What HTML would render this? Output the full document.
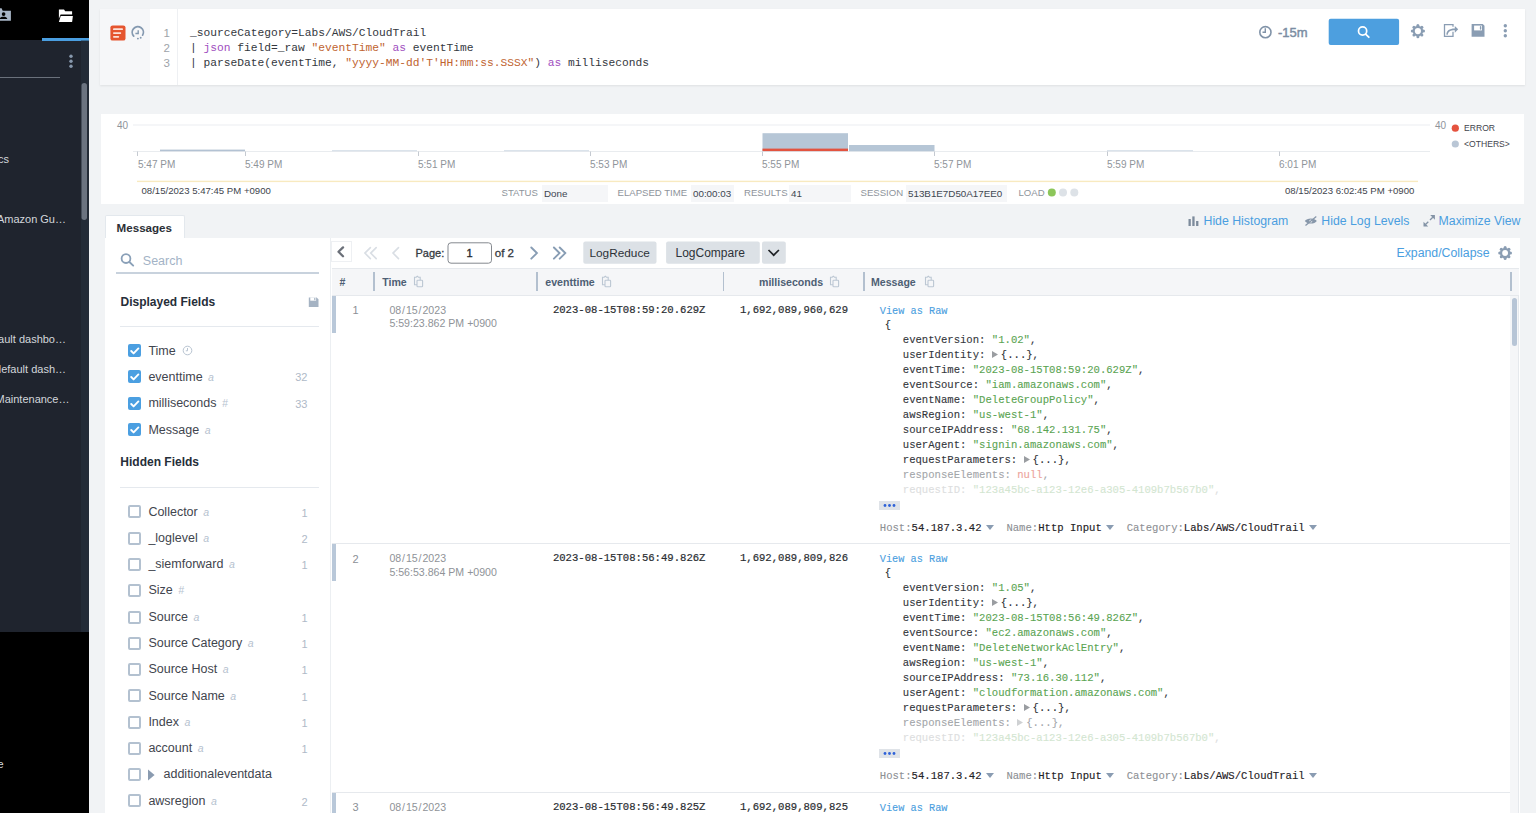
<!DOCTYPE html>
<html><head><meta charset="utf-8">
<style>
*{box-sizing:border-box;margin:0;padding:0}
html,body{width:1536px;height:813px;overflow:hidden;background:#f1f3f5;font-family:"Liberation Sans",sans-serif;position:relative}
.a{position:absolute;white-space:nowrap}
.mono{font-family:"Liberation Mono",monospace}
/* sidebar */
#sb{left:0;top:0;width:89px;height:813px;background:#000}
#sbd{left:0;top:40px;width:89px;height:592px;background:#1f242e}
.sbt{color:#d3d7dc;font-size:11px;line-height:14px}
/* query card */
#qc{left:100px;top:9px;width:1425px;height:76px;background:#fff;box-shadow:0 1px 2px rgba(0,0,0,.08)}
#qg{left:0;top:0;width:50px;height:76px;background:#f6f7f9}
#qln{left:50px;top:0;width:28px;height:76px;border-right:1px solid #eef0f3}
.ln{font-size:11.5px;color:#9ea3a9;line-height:15px;right:8px}
.code{font-size:11.25px;line-height:15px;color:#34383e;left:90px}
.kw{color:#a04ec0}
.st{color:#c0632f}
/* histogram */
#hc{left:101px;top:114px;width:1423px;height:90px;background:#fff}
.hl{font-size:10px;color:#8f949a;line-height:12px;margin-top:1px}
.sl{font-size:9.6px;color:#8e949b;line-height:12px;margin-top:0.4px}
.sv{font-size:9.8px;color:#404650;line-height:17px;background:#f5f6f8;height:16.5px;padding-left:2px}
/* fields panel */
#tab{left:104.5px;top:214.5px;width:80px;height:25px;background:#fff;border-radius:2px 2px 0 0;border:1px solid #e3e8ed;border-bottom:none}
#fp{left:105px;top:238px;width:225px;height:575px;background:#fff}
.fh{font-size:12px;font-weight:bold;color:#262e39;line-height:15px}
.cb{width:13px;height:13px;border-radius:2px}
.cbon{background:#4b9fe1}
.cboff{border:2px solid #b3c1d0;background:#fff}
.fl{font-size:12.5px;color:#3f454e;line-height:15px;left:148px;margin-top:-0.1px}
.ty{font-size:10.5px;color:#b6c2cf;font-style:italic;line-height:12px}
.ct{font-size:11px;color:#afbac8;line-height:12px;margin-top:-1.6px}
/* results */
#rp{left:330px;top:238px;width:1190px;height:575px;background:#fff;border-left:1px solid #eceff2}
#rh{left:332px;top:268px;width:1187px;height:28px;background:#f5f6f8;border-top:1px solid #e6e9ed;border-bottom:1px solid #e6e9ed}
.th{font-size:10.6px;font-weight:bold;color:#4e5f74;line-height:14px;margin-top:-0.5px}
.sep{width:1.5px;height:19px;background:#b3c0cf;top:272px}
.btn{background:#dde2e7;border-radius:2px;height:22px;font-size:13px;color:#31363d;line-height:22px;text-align:center}
.link{color:#4a9ee0;font-size:12.3px;line-height:15px}
.rn{font-size:11px;color:#8c9096;line-height:14px}
.ts{font-size:10.6px;color:#8f9398;line-height:13.4px;margin-top:0.6px}
.sl2{margin:0 0.9px}
.dv{font-size:10.6px;color:#2a2d31;line-height:14px;-webkit-text-stroke:0.2px #2a2d31;margin-top:-0.5px}
.js{font-size:10.6px;line-height:15px;color:#33363b;margin-top:0.5px;-webkit-text-stroke:0.1px currentColor}
.js .s{color:#5aa452}
.js .t{color:#8d9094}
.js .n{color:#e05a4b}
.tri{margin-right:3px;vertical-align:0px}
.hv{font-weight:normal;color:#1f2226;-webkit-text-stroke:0.15px #1f2226}
.mk{left:332px;width:4px;height:37px;background:#b9c8d9}
.rowsep{left:332px;width:1178px;height:1px;background:#e6e9ed}
</style></head><body>

<!-- SIDEBAR -->
<div id="sb" class="a"></div>
<div id="sbd" class="a"></div>
<div class="a" style="left:42px;top:38px;width:47px;height:2.5px;background:#4a9ee0"></div>
<svg class="a" style="left:0;top:0" width="89" height="38" viewBox="0 0 89 38">
  <!-- person folder (cut off) -->
  <path d="M-6 8.3 H1.6 L2.7 10.7 H10.9 V20.8 H-6 Z" fill="#a8b5c6"/>
  <circle cx="3.6" cy="14.1" r="1.85" fill="#000"/>
  <path d="M-0.3 19 C-0.1 17.3 1.6 16.7 3.5 16.7 C5.4 16.7 7.1 17.3 7.3 19 Z" fill="#000"/>
  <!-- open folder -->
  <path d="M58.9 9.6 H64 L65.2 11.2 H72.1 V14.6 H60.6 L58.9 18.8 Z" fill="#fff"/>
  <path d="M60.7 15.9 H72.9 L72.1 21.9 H58.9 Z" fill="#fff"/>
</svg>
<svg class="a" style="left:0;top:40px" width="89" height="592" viewBox="0 40 89 592">
  <circle cx="71" cy="56.3" r="1.7" fill="#8798ad"/>
  <circle cx="71" cy="61.2" r="1.7" fill="#8798ad"/>
  <circle cx="71" cy="66.2" r="1.7" fill="#8798ad"/>
  <rect x="0" y="77" width="60" height="1" fill="#6a717b"/>
  <rect x="81" y="40.6" width="8" height="591.4" fill="#232b37"/>
  <rect x="81.5" y="83" width="5.5" height="137" rx="2.75" fill="#6b7380"/>
</svg>
<div class="a sbt" style="top:152px;right:1527px">cs</div>
<div class="a sbt" style="top:212px;right:1470px">Amazon Gu…</div>
<div class="a sbt" style="top:332px;right:1470px">ault dashbo…</div>
<div class="a sbt" style="top:362px;right:1470px">default dash…</div>
<div class="a sbt" style="top:392px;right:1466.5px">Maintenance…</div>
<div class="a sbt" style="top:757px;right:1532.5px">le</div>

<!-- QUERY CARD -->
<div id="qc" class="a">
  <div id="qg" class="a"></div>
  <div id="qln" class="a"></div>
  <svg class="a" style="left:0;top:0" width="50" height="40" viewBox="100 9 50 40">
    <rect x="110.4" y="25.4" width="15.1" height="15.2" rx="2.2" fill="#e5552f"/>
    <rect x="113" y="28.35" width="10" height="1.7" rx=".85" fill="#fbe1d9"/>
    <rect x="113" y="32.25" width="8.2" height="1.7" rx=".85" fill="#fbe1d9"/>
    <rect x="113" y="35.95" width="6.2" height="1.7" rx=".85" fill="#fbe1d9"/>
    <path d="M133.7 36.1 A5.6 5.6 0 1 1 142.65 35.1" fill="none" stroke="#8499b0" stroke-width="1.8" stroke-linecap="round"/>
    <path d="M138.2 30.2 V33.5 H135.4" fill="none" stroke="#8499b0" stroke-width="1.4"/>
    <circle cx="137.9" cy="38.6" r="0.95" fill="#8499b0"/>
    <circle cx="140.7" cy="37.7" r="0.95" fill="#8499b0"/>
  </svg>
  <div class="a ln" style="top:16.7px;left:50px;width:20px;text-align:right">1<br>2<br>3</div>
  <div class="a code mono" style="top:16.8px">_sourceCategory=Labs/AWS/CloudTrail<br>| <span class="kw">json</span> field=_raw <span class="st">"eventTime"</span> <span class="kw">as</span> eventTime<br>| parseDate(eventTime, <span class="st">"yyyy-MM-dd'T'HH:mm:ss.SSSX"</span>) <span class="kw">as</span> milliseconds</div>
  <!-- right toolbar -->
  <svg class="a" style="left:1150px;top:0" width="275" height="76" viewBox="1250 9 275 76">
    <circle cx="1265.4" cy="32.2" r="5.6" fill="none" stroke="#8193a8" stroke-width="1.6"/>
    <path d="M1265.3 28.3 V32.3 H1262.5" fill="none" stroke="#8193a8" stroke-width="1.4"/>
    <rect x="1328.7" y="18.7" width="70.4" height="26.3" rx="2" fill="#4d9fdf"/>
    <circle cx="1362.6" cy="31" r="4.1" fill="none" stroke="#fff" stroke-width="1.7"/>
    <path d="M1365.6 34.1 L1368.8 37.2" stroke="#fff" stroke-width="1.8" stroke-linecap="round"/>
    <!-- gear -->
    <g transform="translate(1417.9 31.1)" fill="#8a9db3">
      <circle r="5.3"/>
      <g id="teeth">
      <circle cx="0" cy="-5.6" r="1.5"/><circle cx="0" cy="5.6" r="1.5"/><circle cx="5.6" cy="0" r="1.5"/><circle cx="-5.6" cy="0" r="1.5"/>
      <circle cx="3.96" cy="3.96" r="1.5"/><circle cx="-3.96" cy="3.96" r="1.5"/><circle cx="3.96" cy="-3.96" r="1.5"/><circle cx="-3.96" cy="-3.96" r="1.5"/>
      </g>
      <circle r="3.1" fill="#fff"/>
    </g>
    <!-- share -->
    <path d="M1453 26.8 V24.6 H1444.5 V36.4 H1453 V31.8" fill="none" stroke="#8a9db3" stroke-width="1.3"/>
    <path d="M1446.4 34.8 C1446.4 30.8 1449.2 28.6 1454.8 28.6 V25.9 L1458.2 29.3 L1454.8 32.7 V30.2 C1450.5 30.2 1448.1 31.6 1447.8 34.8 Z" fill="#8a9db3"/>
    <!-- save -->
    <path d="M1471.6 24 H1482.7 L1484.5 25.8 V36.8 H1471.6 Z" fill="#8a9db3"/>
    <rect x="1474.1" y="25.6" width="7.9" height="4.8" fill="#fff"/>
    <rect x="1479.9" y="26.1" width="1.4" height="3.6" rx=".7" fill="#8a9db3"/>
    <circle cx="1505.3" cy="25.7" r="1.7" fill="#8a9db3"/>
    <circle cx="1505.3" cy="30.7" r="1.7" fill="#8a9db3"/>
    <circle cx="1505.3" cy="35.7" r="1.7" fill="#8a9db3"/>
  </svg>
  <div class="a" style="left:1178px;top:16px;font-size:13px;line-height:16px;color:#7b8da3;-webkit-text-stroke:0.45px #7b8da3">-15m</div>
</div>

<!-- HISTOGRAM -->
<div id="hc" class="a"></div>
<svg class="a" style="left:101px;top:114px" width="1421" height="90" viewBox="101 114 1421 90">
  <rect x="133" y="124.5" width="1297" height="1" fill="#eceef1"/>
  <rect x="133" y="151" width="1297" height="1" fill="#e9ecef"/>
  <rect x="160" y="149.6" width="85" height="1.6" fill="#b3c2d3"/>
  <rect x="332" y="150.2" width="85" height="1" fill="#d3dce6"/>
  <rect x="504" y="150.2" width="85" height="1" fill="#d3dce6"/>
  <rect x="1107" y="150.2" width="86" height="1" fill="#d3dce6"/>
  <rect x="762.5" y="133.2" width="85.5" height="18" fill="#b6c6d6"/>
  <rect x="762.5" y="148.6" width="85.5" height="2.5" fill="#e3533f"/>
  <rect x="849" y="145" width="85.5" height="6.2" fill="#b6c6d6"/>
  <g fill="#c5cad1">
    <rect x="137" y="151.5" width="1" height="4.5"/>
    <rect x="245" y="151.5" width="1" height="4.5"/>
    <rect x="418" y="151.5" width="1" height="4.5"/>
    <rect x="590" y="151.5" width="1" height="4.5"/>
    <rect x="762" y="151.5" width="1" height="4.5"/>
    <rect x="934" y="151.5" width="1" height="4.5"/>
    <rect x="1107" y="151.5" width="1" height="4.5"/>
    <rect x="1279" y="151.5" width="1" height="4.5"/>
  </g>
  <rect x="137" y="180.7" width="1281" height="1.4" fill="#f8eac0"/>
  <circle cx="1455.3" cy="128.2" r="3.6" fill="#e5533f"/>
  <circle cx="1455.3" cy="144" r="3.6" fill="#b9c6d5"/>
</svg>
<div class="a hl" style="left:117px;top:119px">40</div>
<div class="a hl" style="left:1435px;top:119px">40</div>
<div class="a" style="left:1464px;top:122px;font-size:8.6px;line-height:12px;color:#3f454d">ERROR</div>
<div class="a" style="left:1464px;top:138px;font-size:8.6px;line-height:12px;color:#3f454d">&lt;OTHERS&gt;</div>
<div class="a hl" style="left:138px;top:157.5px">5:47 PM</div>
<div class="a hl" style="left:245px;top:157.5px">5:49 PM</div>
<div class="a hl" style="left:418px;top:157.5px">5:51 PM</div>
<div class="a hl" style="left:590px;top:157.5px">5:53 PM</div>
<div class="a hl" style="left:762px;top:157.5px">5:55 PM</div>
<div class="a hl" style="left:934px;top:157.5px">5:57 PM</div>
<div class="a hl" style="left:1107px;top:157.5px">5:59 PM</div>
<div class="a hl" style="left:1279px;top:157.5px">6:01 PM</div>
<div class="a" style="left:141.5px;top:184.5px;font-size:9.6px;line-height:12px;color:#3e444c">08/15/2023 5:47:45 PM +0900</div>
<div class="a" style="left:1285px;top:184.5px;font-size:9.6px;line-height:12px;color:#3e444c">08/15/2023 6:02:45 PM +0900</div>
<div class="a sl" style="left:501.5px;top:187px">STATUS</div>
<div class="a sv" style="left:542px;top:185px;width:65.5px">Done</div>
<div class="a sl" style="left:617.5px;top:187px">ELAPSED TIME</div>
<div class="a sv" style="left:691px;top:185px;width:43px">00:00:03</div>
<div class="a sl" style="left:744px;top:187px">RESULTS</div>
<div class="a sv" style="left:789px;top:185px;width:62px">41</div>
<div class="a sl" style="left:860.5px;top:187px">SESSION</div>
<div class="a sv" style="left:906px;top:185px;width:100.5px">513B1E7D50A17EE0</div>
<div class="a sl" style="left:1018.5px;top:187px">LOAD</div>
<svg class="a" style="left:1046px;top:186px" width="36" height="14" viewBox="1046 186 36 14">
  <circle cx="1051.8" cy="192.6" r="4" fill="#8cc65a"/>
  <circle cx="1063" cy="192.6" r="4" fill="#dde2e7"/>
  <circle cx="1074.3" cy="192.6" r="4" fill="#dde2e7"/>
</svg>

<svg class="a" style="left:1186px;top:213px" width="252" height="16" viewBox="1186 213 252 16">
  <rect x="1188.5" y="219" width="2.3" height="7" fill="#7d8b9c"/>
  <rect x="1192.3" y="216.4" width="2.3" height="9.6" fill="#7d8b9c"/>
  <rect x="1196.1" y="221" width="2.3" height="5" fill="#7d8b9c"/>
  <path d="M1304.8 221 C1306.8 217.6 1314.8 217.6 1316.8 221 C1314.8 224.4 1306.8 224.4 1304.8 221 Z" fill="#8797aa"/>
  <circle cx="1310.8" cy="221" r="1.5" fill="#f1f3f5"/>
  <path d="M1305.5 225.5 L1316.3 216.5" stroke="#8797aa" stroke-width="1.3"/>
  <path d="M1425.5 224.5 L1428.3 221.7 M1430 220 L1432.8 217.2" stroke="#8393a6" stroke-width="1.3"/>
  <path d="M1423.5 221.8 V226.5 H1428.2 Z M1430.2 215 H1434.9 V219.7 Z" fill="#8393a6"/>
</svg>
<div class="a link" style="left:1203.5px;top:213.7px">Hide Histogram</div>
<div class="a link" style="left:1321.3px;top:213.7px">Hide Log Levels</div>
<div class="a link" style="left:1438.6px;top:213.7px">Maximize View</div>
<!-- FIELDS -->
<div id="tab" class="a"></div>
<div id="fp" class="a"></div>
<div class="a" style="left:116.6px;top:220.5px;font-size:11.6px;line-height:14px;color:#2b2f35;font-weight:bold">Messages</div>
<svg class="a" style="left:116px;top:250px" width="24" height="20" viewBox="116 250 24 20">
  <circle cx="126" cy="258.6" r="4.4" fill="none" stroke="#8aa0b8" stroke-width="1.8"/>
  <path d="M129.4 262 L133.2 265.6" stroke="#8aa0b8" stroke-width="1.9" stroke-linecap="round"/>
</svg>
<div class="a" style="left:142.8px;top:253.5px;font-size:12.5px;line-height:15px;color:#a3b3c6">Search</div>
<div class="a" style="left:116px;top:272px;width:203px;height:1.5px;background:#c8d2dd"></div>
<div class="a fh" style="left:120.5px;top:295px">Displayed Fields</div>
<svg class="a" style="left:306px;top:295px" width="15" height="14" viewBox="306 295 15 14">
  <path d="M308.8 297.4 H316.6 L318.5 299.3 V307 H308.8 Z" fill="#a5b3c3"/>
  <rect x="310.3" y="297.4" width="5.8" height="3.3" fill="#fff"/>
  <rect x="314.2" y="297.9" width="1.2" height="2.3" fill="#a5b3c3"/>
</svg>
<div class="a" style="left:120px;top:326px;width:199px;height:1px;background:#e5e9ee"></div>
<div class="a fh" style="left:120.3px;top:455px">Hidden Fields</div>
<div class="a" style="left:120px;top:486.5px;width:199px;height:1px;background:#e5e9ee"></div>
<div class="a cb cbon" style="left:127.6px;top:344.00px"><svg width="13.5" height="13.5" viewBox="0 0 13.5 13.5" style="position:absolute;left:0;top:0"><path d="M3.2 7 L5.6 9.4 L10.4 4.4" fill="none" stroke="#fff" stroke-width="1.9" stroke-linecap="round" stroke-linejoin="round"/></svg></div>
<div class="a fl" style="left:148.4px;top:343.65px"><span>Time</span><svg style="margin-left:6px;vertical-align:-1px" width="11" height="11" viewBox="0 0 11 11"><circle cx="5.5" cy="5.5" r="4.3" fill="none" stroke="#b8c4d1" stroke-width="1"/><path d="M5.5 3 V5.8 H3.8" fill="none" stroke="#b8c4d1" stroke-width="1"/></svg></div>
<div class="a cb cbon" style="left:127.6px;top:370.33px"><svg width="13.5" height="13.5" viewBox="0 0 13.5 13.5" style="position:absolute;left:0;top:0"><path d="M3.2 7 L5.6 9.4 L10.4 4.4" fill="none" stroke="#fff" stroke-width="1.9" stroke-linecap="round" stroke-linejoin="round"/></svg></div>
<div class="a fl" style="left:148.4px;top:369.98px"><span>eventtime</span><span class="ty" style="margin-left:5.5px">a</span></div>
<div class="a ct" style="right:1228.5px;top:373.08px">32</div>
<div class="a cb cbon" style="left:127.6px;top:396.66px"><svg width="13.5" height="13.5" viewBox="0 0 13.5 13.5" style="position:absolute;left:0;top:0"><path d="M3.2 7 L5.6 9.4 L10.4 4.4" fill="none" stroke="#fff" stroke-width="1.9" stroke-linecap="round" stroke-linejoin="round"/></svg></div>
<div class="a fl" style="left:148.4px;top:396.31px"><span>milliseconds</span><span class="ty" style="margin-left:5.5px">#</span></div>
<div class="a ct" style="right:1228.5px;top:399.41px">33</div>
<div class="a cb cbon" style="left:127.6px;top:422.99px"><svg width="13.5" height="13.5" viewBox="0 0 13.5 13.5" style="position:absolute;left:0;top:0"><path d="M3.2 7 L5.6 9.4 L10.4 4.4" fill="none" stroke="#fff" stroke-width="1.9" stroke-linecap="round" stroke-linejoin="round"/></svg></div>
<div class="a fl" style="left:148.4px;top:422.64px"><span>Message</span><span class="ty" style="margin-left:5.5px">a</span></div>
<div class="a cb cboff" style="left:127.6px;top:505.40px"></div>
<div class="a fl" style="left:148.4px;top:504.75px"><span>Collector</span><span class="ty" style="margin-left:5.5px">a</span></div>
<div class="a ct" style="right:1228.5px;top:508.15px">1</div>
<div class="a cb cboff" style="left:127.6px;top:531.68px"></div>
<div class="a fl" style="left:148.4px;top:531.03px"><span>_loglevel</span><span class="ty" style="margin-left:5.5px">a</span></div>
<div class="a ct" style="right:1228.5px;top:534.43px">2</div>
<div class="a cb cboff" style="left:127.6px;top:557.96px"></div>
<div class="a fl" style="left:148.4px;top:557.31px"><span>_siemforward</span><span class="ty" style="margin-left:5.5px">a</span></div>
<div class="a ct" style="right:1228.5px;top:560.71px">1</div>
<div class="a cb cboff" style="left:127.6px;top:584.24px"></div>
<div class="a fl" style="left:148.4px;top:583.59px"><span>Size</span><span class="ty" style="margin-left:5.5px">#</span></div>
<div class="a cb cboff" style="left:127.6px;top:610.52px"></div>
<div class="a fl" style="left:148.4px;top:609.87px"><span>Source</span><span class="ty" style="margin-left:5.5px">a</span></div>
<div class="a ct" style="right:1228.5px;top:613.27px">1</div>
<div class="a cb cboff" style="left:127.6px;top:636.80px"></div>
<div class="a fl" style="left:148.4px;top:636.15px"><span>Source Category</span><span class="ty" style="margin-left:5.5px">a</span></div>
<div class="a ct" style="right:1228.5px;top:639.55px">1</div>
<div class="a cb cboff" style="left:127.6px;top:663.08px"></div>
<div class="a fl" style="left:148.4px;top:662.43px"><span>Source Host</span><span class="ty" style="margin-left:5.5px">a</span></div>
<div class="a ct" style="right:1228.5px;top:665.83px">1</div>
<div class="a cb cboff" style="left:127.6px;top:689.36px"></div>
<div class="a fl" style="left:148.4px;top:688.71px"><span>Source Name</span><span class="ty" style="margin-left:5.5px">a</span></div>
<div class="a ct" style="right:1228.5px;top:692.11px">1</div>
<div class="a cb cboff" style="left:127.6px;top:715.64px"></div>
<div class="a fl" style="left:148.4px;top:714.99px"><span>Index</span><span class="ty" style="margin-left:5.5px">a</span></div>
<div class="a ct" style="right:1228.5px;top:718.39px">1</div>
<div class="a cb cboff" style="left:127.6px;top:741.92px"></div>
<div class="a fl" style="left:148.4px;top:741.27px"><span>account</span><span class="ty" style="margin-left:5.5px">a</span></div>
<div class="a ct" style="right:1228.5px;top:744.67px">1</div>
<div class="a cb cboff" style="left:127.6px;top:768.20px"></div>
<svg class="a" style="left:148.4px;top:768.95px" width="8" height="12" viewBox="0 0 8 12"><path d="M0 0.5 L6.6 6 L0 11.5 Z" fill="#8a9bb0"/></svg>
<div class="a fl" style="left:163.5px;top:767.55px"><span>additionaleventdata</span></div>
<div class="a cb cboff" style="left:127.6px;top:794.48px"></div>
<div class="a fl" style="left:148.4px;top:793.83px"><span>awsregion</span><span class="ty" style="margin-left:5.5px">a</span></div>
<div class="a ct" style="right:1228.5px;top:797.23px">2</div>

<!-- RESULTS -->
<div id="rp" class="a"></div>
<div id="rh" class="a"></div>
<svg class="a" style="left:331px;top:238px" width="460" height="30" viewBox="331 238 460 30">
  <rect x="331.5" y="241.5" width="20" height="20" fill="#fff" stroke="#eef0f3" stroke-width="1"/>
  <path d="M343 247.4 L338.5 251.8 L343 256.2" fill="none" stroke="#6b7079" stroke-width="2.3" stroke-linecap="round" stroke-linejoin="round"/>
  <path d="M370.4 247.6 L364.9 253.1 L370.4 258.6 M376.2 247.6 L370.7 253.1 L376.2 258.6" fill="none" stroke="#d9dee4" stroke-width="1.6" stroke-linecap="round"/>
  <path d="M398.5 247.6 L393 253.1 L398.5 258.6" fill="none" stroke="#d9dee4" stroke-width="1.6" stroke-linecap="round"/>
  <rect x="448" y="242.8" width="43.5" height="20.4" rx="3" fill="#fff" stroke="#85898f" stroke-width="1"/>
  <path d="M531.3 247.5 L536.9 253.1 L531.3 258.7" fill="none" stroke="#889db4" stroke-width="1.9" stroke-linecap="round"/>
  <path d="M553.9 247.5 L559.5 253.1 L553.9 258.7 M559.7 247.5 L565.3 253.1 L559.7 258.7" fill="none" stroke="#889db4" stroke-width="1.9" stroke-linecap="round"/>
  <rect x="583.3" y="241.4" width="73.2" height="22.3" rx="2" fill="#dce1e6"/>
  <rect x="666.1" y="241.4" width="93.7" height="22.3" rx="2" fill="#dce1e6"/>
  <rect x="762" y="241.4" width="23.8" height="22.3" rx="2" fill="#dce1e6"/>
  <path d="M768.5 250 L773.7 255.2 L778.9 250" fill="none" stroke="#1f2226" stroke-width="1.7"/>
</svg>
<div class="a" style="left:415.5px;top:245px;font-size:11px;line-height:15px;color:#353a41;margin-top:0.6px;-webkit-text-stroke:0.3px #353a41">Page:</div>
<div class="a" style="left:466.5px;top:245.6px;font-size:11px;line-height:15px;color:#25292e;-webkit-text-stroke:0.35px #25292e">1</div>
<div class="a" style="left:494.8px;top:245px;font-size:11.5px;line-height:15px;color:#353a41;margin-top:0.6px;-webkit-text-stroke:0.3px #353a41">of 2</div>
<div class="a" style="left:589.5px;top:245.6px;font-size:11.8px;line-height:15px;color:#2d3238">LogReduce</div>
<div class="a" style="left:675.5px;top:245.6px;font-size:12px;line-height:15px;color:#2d3238">LogCompare</div>
<div class="a link" style="left:1396.5px;top:245.7px">Expand/Collapse</div>
<svg class="a" style="left:1496px;top:244px" width="18" height="18" viewBox="1496 244 18 18">
    <g transform="translate(1505.1 253)" fill="#8a9db3">
      <circle r="5.2"/>
      <circle cx="0" cy="-5.4" r="1.5"/><circle cx="0" cy="5.4" r="1.5"/><circle cx="5.4" cy="0" r="1.5"/><circle cx="-5.4" cy="0" r="1.5"/>
      <circle cx="3.82" cy="3.82" r="1.5"/><circle cx="-3.82" cy="3.82" r="1.5"/><circle cx="3.82" cy="-3.82" r="1.5"/><circle cx="-3.82" cy="-3.82" r="1.5"/>
      <circle r="2.9" fill="#fff"/>
    </g>
</svg>
<svg class="a" style="left:413.1px;top:275px" width="11" height="13" viewBox="0 0 11 13"><path d="M1.5 2.2 H3.2 L4.3 1.2 L5.4 2.2 H7.2 V9.8 H1.5 Z" fill="none" stroke="#bcc7d3" stroke-width="1.1"/><rect x="4" y="5.2" width="5.6" height="6.6" rx=".8" fill="#f5f6f8" stroke="#bcc7d3" stroke-width="1.1"/></svg>
<svg class="a" style="left:601.2px;top:275px" width="11" height="13" viewBox="0 0 11 13"><path d="M1.5 2.2 H3.2 L4.3 1.2 L5.4 2.2 H7.2 V9.8 H1.5 Z" fill="none" stroke="#bcc7d3" stroke-width="1.1"/><rect x="4" y="5.2" width="5.6" height="6.6" rx=".8" fill="#f5f6f8" stroke="#bcc7d3" stroke-width="1.1"/></svg>
<svg class="a" style="left:829.4px;top:275px" width="11" height="13" viewBox="0 0 11 13"><path d="M1.5 2.2 H3.2 L4.3 1.2 L5.4 2.2 H7.2 V9.8 H1.5 Z" fill="none" stroke="#bcc7d3" stroke-width="1.1"/><rect x="4" y="5.2" width="5.6" height="6.6" rx=".8" fill="#f5f6f8" stroke="#bcc7d3" stroke-width="1.1"/></svg>
<svg class="a" style="left:924.1px;top:275px" width="11" height="13" viewBox="0 0 11 13"><path d="M1.5 2.2 H3.2 L4.3 1.2 L5.4 2.2 H7.2 V9.8 H1.5 Z" fill="none" stroke="#bcc7d3" stroke-width="1.1"/><rect x="4" y="5.2" width="5.6" height="6.6" rx=".8" fill="#f5f6f8" stroke="#bcc7d3" stroke-width="1.1"/></svg>
<div class="a th" style="left:339.5px;top:275px">#</div>
<div class="a th" style="left:382.2px;top:275px">Time</div>
<div class="a th" style="left:545.3px;top:275px">eventtime</div>
<div class="a th" style="left:759px;top:275px">milliseconds</div>
<div class="a th" style="left:871px;top:275px">Message</div>
<div class="a sep" style="left:373.2px"></div>
<div class="a sep" style="left:536.3px"></div>
<div class="a sep" style="left:722.5px"></div>
<div class="a sep" style="left:863px"></div>
<div class="a sep" style="left:1510px"></div>
<div class="a" style="left:1510px;top:296px;width:9px;height:517px;background:#f5f6f8;border-right:1px solid #e6e9ed"></div>
<div class="a" style="left:1512.2px;top:298px;width:5px;height:48px;border-radius:2.5px;background:#b7c5d6"></div>
<div class="a mk" style="top:296.0px"></div>
<div class="a rn" style="left:352.5px;top:303.3px">1</div>
<div class="a ts" style="left:389.4px;top:303.3px">08<span class="sl2">/</span>15<span class="sl2">/</span>2023<br>5:59:23.862 PM +0900</div>
<div class="a dv mono" style="left:552.9px;top:303.5px">2023-08-15T08:59:20.629Z</div>
<div class="a dv mono" style="right:688px;top:303.5px">1,692,089,960,629</div>
<div class="a js mono" style="left:879.8px;top:303.2px;color:#4a9ee0;font-size:10.25px">View as Raw</div>
<div class="a js mono" style="left:879.8px;top:317.2px;color:#2c2f33;margin-left:5px">{</div>
<div class="a js mono" style="left:902.8px;top:332.2px">eventVersion: <span class="s">"1.02"</span>,<br>userIdentity: <svg class="tri" width="6" height="7" viewBox="0 0 6 7"><path d="M0 0 L6 3.5 L0 7 Z" fill="#9a9da1"/></svg><span style="color:#2c2f33">{...}</span>,<br>eventTime: <span class="s">"2023-08-15T08:59:20.629Z"</span>,<br>eventSource: <span class="s">"iam.amazonaws.com"</span>,<br>eventName: <span class="s">"DeleteGroupPolicy"</span>,<br>awsRegion: <span class="s">"us-west-1"</span>,<br>sourceIPAddress: <span class="s">"68.142.131.75"</span>,<br>userAgent: <span class="s">"signin.amazonaws.com"</span>,<br>requestParameters: <svg class="tri" width="6" height="7" viewBox="0 0 6 7"><path d="M0 0 L6 3.5 L0 7 Z" fill="#9a9da1"/></svg><span style="color:#2c2f33">{...}</span>,<br><span style="color:#a3a6aa">responseElements: <span style="color:#eda39a">null</span>,</span><br><span style="color:#dddee0">requestID: <span style="color:#d3e6d1">"123a45bc-a123-12e6-a305-4109b7b567b0"</span>,</span></div>
<svg class="a" style="left:879px;top:501.0px" width="21" height="9" viewBox="0 0 21 9"><rect width="21" height="9" fill="#dfe3e8"/><circle cx="6" cy="4.5" r="1.4" fill="#2f62d8"/><circle cx="10.5" cy="4.5" r="1.4" fill="#2f62d8"/><circle cx="15" cy="4.5" r="1.4" fill="#2f62d8"/></svg>
<div class="a js mono" style="left:879.8px;top:520.2px;color:#26292d"><span class="t">Host:</span><b class="hv">54.187.3.42</b><svg style="margin:0 6.5px 0 4px;vertical-align:1px" width="8" height="5" viewBox="0 0 8 5"><path d="M0 0 H8 L4 5 Z" fill="#8a9cb2"/></svg> <span class="t">Name:</span><b class="hv">Http Input</b><svg style="margin:0 6.5px 0 4px;vertical-align:1px" width="8" height="5" viewBox="0 0 8 5"><path d="M0 0 H8 L4 5 Z" fill="#8a9cb2"/></svg> <span class="t">Category:</span><b class="hv">Labs/AWS/CloudTrail</b><svg style="margin:0 6.5px 0 4px;vertical-align:1px" width="8" height="5" viewBox="0 0 8 5"><path d="M0 0 H8 L4 5 Z" fill="#8a9cb2"/></svg></div>
<div class="a rowsep" style="top:543.4px"></div>
<div class="a mk" style="top:544.4px"></div>
<div class="a rn" style="left:352.5px;top:551.7px">2</div>
<div class="a ts" style="left:389.4px;top:551.7px">08<span class="sl2">/</span>15<span class="sl2">/</span>2023<br>5:56:53.864 PM +0900</div>
<div class="a dv mono" style="left:552.9px;top:551.9px">2023-08-15T08:56:49.826Z</div>
<div class="a dv mono" style="right:688px;top:551.9px">1,692,089,809,826</div>
<div class="a js mono" style="left:879.8px;top:551.6px;color:#4a9ee0;font-size:10.25px">View as Raw</div>
<div class="a js mono" style="left:879.8px;top:565.6px;color:#2c2f33;margin-left:5px">{</div>
<div class="a js mono" style="left:902.8px;top:580.6px">eventVersion: <span class="s">"1.05"</span>,<br>userIdentity: <svg class="tri" width="6" height="7" viewBox="0 0 6 7"><path d="M0 0 L6 3.5 L0 7 Z" fill="#9a9da1"/></svg><span style="color:#2c2f33">{...}</span>,<br>eventTime: <span class="s">"2023-08-15T08:56:49.826Z"</span>,<br>eventSource: <span class="s">"ec2.amazonaws.com"</span>,<br>eventName: <span class="s">"DeleteNetworkAclEntry"</span>,<br>awsRegion: <span class="s">"us-west-1"</span>,<br>sourceIPAddress: <span class="s">"73.16.30.112"</span>,<br>userAgent: <span class="s">"cloudformation.amazonaws.com"</span>,<br>requestParameters: <svg class="tri" width="6" height="7" viewBox="0 0 6 7"><path d="M0 0 L6 3.5 L0 7 Z" fill="#9a9da1"/></svg><span style="color:#2c2f33">{...}</span>,<br><span style="color:#a3a6aa">responseElements: <svg class="tri" width="6" height="7" viewBox="0 0 6 7"><path d="M0 0 L6 3.5 L0 7 Z" fill="#cfd1d3"/></svg>{...},</span><br><span style="color:#dddee0">requestID: <span style="color:#d3e6d1">"123a45bc-a123-12e6-a305-4109b7b567b0"</span>,</span></div>
<svg class="a" style="left:879px;top:749.4px" width="21" height="9" viewBox="0 0 21 9"><rect width="21" height="9" fill="#dfe3e8"/><circle cx="6" cy="4.5" r="1.4" fill="#2f62d8"/><circle cx="10.5" cy="4.5" r="1.4" fill="#2f62d8"/><circle cx="15" cy="4.5" r="1.4" fill="#2f62d8"/></svg>
<div class="a js mono" style="left:879.8px;top:768.6px;color:#26292d"><span class="t">Host:</span><b class="hv">54.187.3.42</b><svg style="margin:0 6.5px 0 4px;vertical-align:1px" width="8" height="5" viewBox="0 0 8 5"><path d="M0 0 H8 L4 5 Z" fill="#8a9cb2"/></svg> <span class="t">Name:</span><b class="hv">Http Input</b><svg style="margin:0 6.5px 0 4px;vertical-align:1px" width="8" height="5" viewBox="0 0 8 5"><path d="M0 0 H8 L4 5 Z" fill="#8a9cb2"/></svg> <span class="t">Category:</span><b class="hv">Labs/AWS/CloudTrail</b><svg style="margin:0 6.5px 0 4px;vertical-align:1px" width="8" height="5" viewBox="0 0 8 5"><path d="M0 0 H8 L4 5 Z" fill="#8a9cb2"/></svg></div>
<div class="a rowsep" style="top:791.8px"></div>
<div class="a mk" style="top:792.8px"></div>
<div class="a rn" style="left:352.5px;top:800.1px">3</div>
<div class="a ts" style="left:389.4px;top:800.1px">08<span class="sl2">/</span>15<span class="sl2">/</span>2023<br>5:56:53.863 PM +0900</div>
<div class="a dv mono" style="left:552.9px;top:800.3px">2023-08-15T08:56:49.825Z</div>
<div class="a dv mono" style="right:688px;top:800.3px">1,692,089,809,825</div>
<div class="a js mono" style="left:879.8px;top:800.0px;color:#4a9ee0;font-size:10.25px">View as Raw</div>

</body></html>
